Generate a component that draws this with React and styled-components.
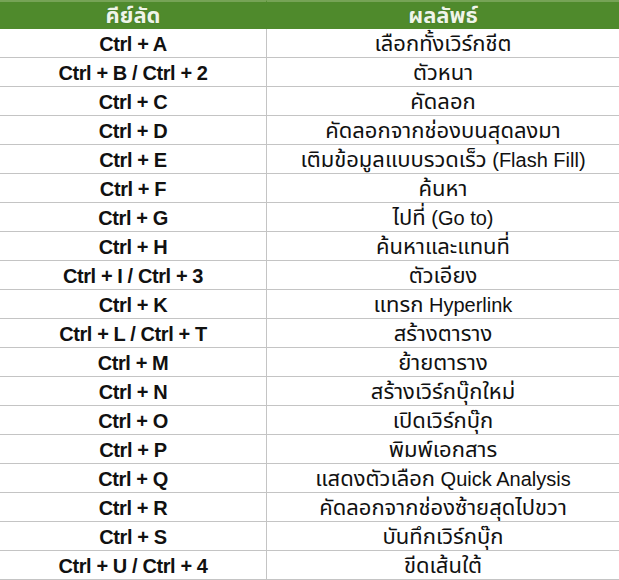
import React from "react";
import styled, { createGlobalStyle } from "styled-components";

const Global = createGlobalStyle`
  html, body { margin: 0; padding: 0; background: #ffffff; }
  body { font-family: "Liberation Sans", "Noto Sans", "Noto Sans Thai", Tahoma, sans-serif; }
`;

const rows = [
  ["Ctrl + A", "เลือกทั้งเวิร์กชีต"],
  ["Ctrl + B / Ctrl + 2", "ตัวหนา"],
  ["Ctrl + C", "คัดลอก"],
  ["Ctrl + D", "คัดลอกจากช่องบนสุดลงมา"],
  ["Ctrl + E", "เติมข้อมูลแบบรวดเร็ว (Flash Fill)"],
  ["Ctrl + F", "ค้นหา"],
  ["Ctrl + G", "ไปที่ (Go to)"],
  ["Ctrl + H", "ค้นหาและแทนที่"],
  ["Ctrl + I / Ctrl + 3", "ตัวเอียง"],
  ["Ctrl + K", "แทรก Hyperlink"],
  ["Ctrl + L / Ctrl + T", "สร้างตาราง"],
  ["Ctrl + M", "ย้ายตาราง"],
  ["Ctrl + N", "สร้างเวิร์กบุ๊กใหม่"],
  ["Ctrl + O", "เปิดเวิร์กบุ๊ก"],
  ["Ctrl + P", "พิมพ์เอกสาร"],
  ["Ctrl + Q", "แสดงตัวเลือก Quick Analysis"],
  ["Ctrl + R", "คัดลอกจากช่องซ้ายสุดไปขวา"],
  ["Ctrl + S", "บันทึกเวิร์กบุ๊ก"],
  ["Ctrl + U / Ctrl + 4", "ขีดเส้นใต้"],
];

const Table = styled.div`
  width: 619px;
  display: grid;
  grid-template-columns: 267px 352px;
`;

const HeadCell = styled.div`
  height: 29px;
  box-sizing: border-box;
  background: #4f8a2c;
  border-top: 2px solid #76a356;
  color: #eef5e8;
  font-weight: bold;
  font-size: 22px;
  display: flex;
  align-items: center;
  justify-content: center;
  padding-top: 1px;
  text-shadow: 0 0 1px rgba(0,0,0,0.35);
  border-right: ${(p) => (p.$first ? "1px solid #4f8a2c" : "none")};
`;

const Cell = styled.div`
  height: 29px;
  box-sizing: border-box;
  border-bottom: 1px solid #c4c4c4;
  border-right: ${(p) => (p.$first ? "1px solid #c4c4c4" : "none")};
  display: flex;
  align-items: center;
  justify-content: center;
  padding-top: 2px;
  color: #111;
  font-size: ${(p) => (p.$first ? "20px" : "20px")};
  letter-spacing: ${(p) => (p.$first ? "-0.4px" : "0")};
  font-weight: ${(p) => (p.$first ? "bold" : "normal")};
  white-space: pre;
`;

const Thai = styled.span`
  font-size: 22px;
  line-height: 1;
`;

function Mixed({ text }) {
  const parts = text.split(/([\u0E00-\u0E7F]+)/).filter(Boolean);
  return parts.map((p, i) =>
    /[\u0E00-\u0E7F]/.test(p) ? <Thai key={i}>{p}</Thai> : <span key={i}>{p}</span>
  );
}

export default function App() {
  return (
    <>
      <Global />
      <Table>
        <HeadCell $first>คีย์ลัด</HeadCell>
        <HeadCell>ผลลัพธ์</HeadCell>
        {rows.map(([k, v]) => (
          <React.Fragment key={k}>
            <Cell $first>{k}</Cell>
            <Cell>
              <Mixed text={v} />
            </Cell>
          </React.Fragment>
        ))}
      </Table>
    </>
  );
}
